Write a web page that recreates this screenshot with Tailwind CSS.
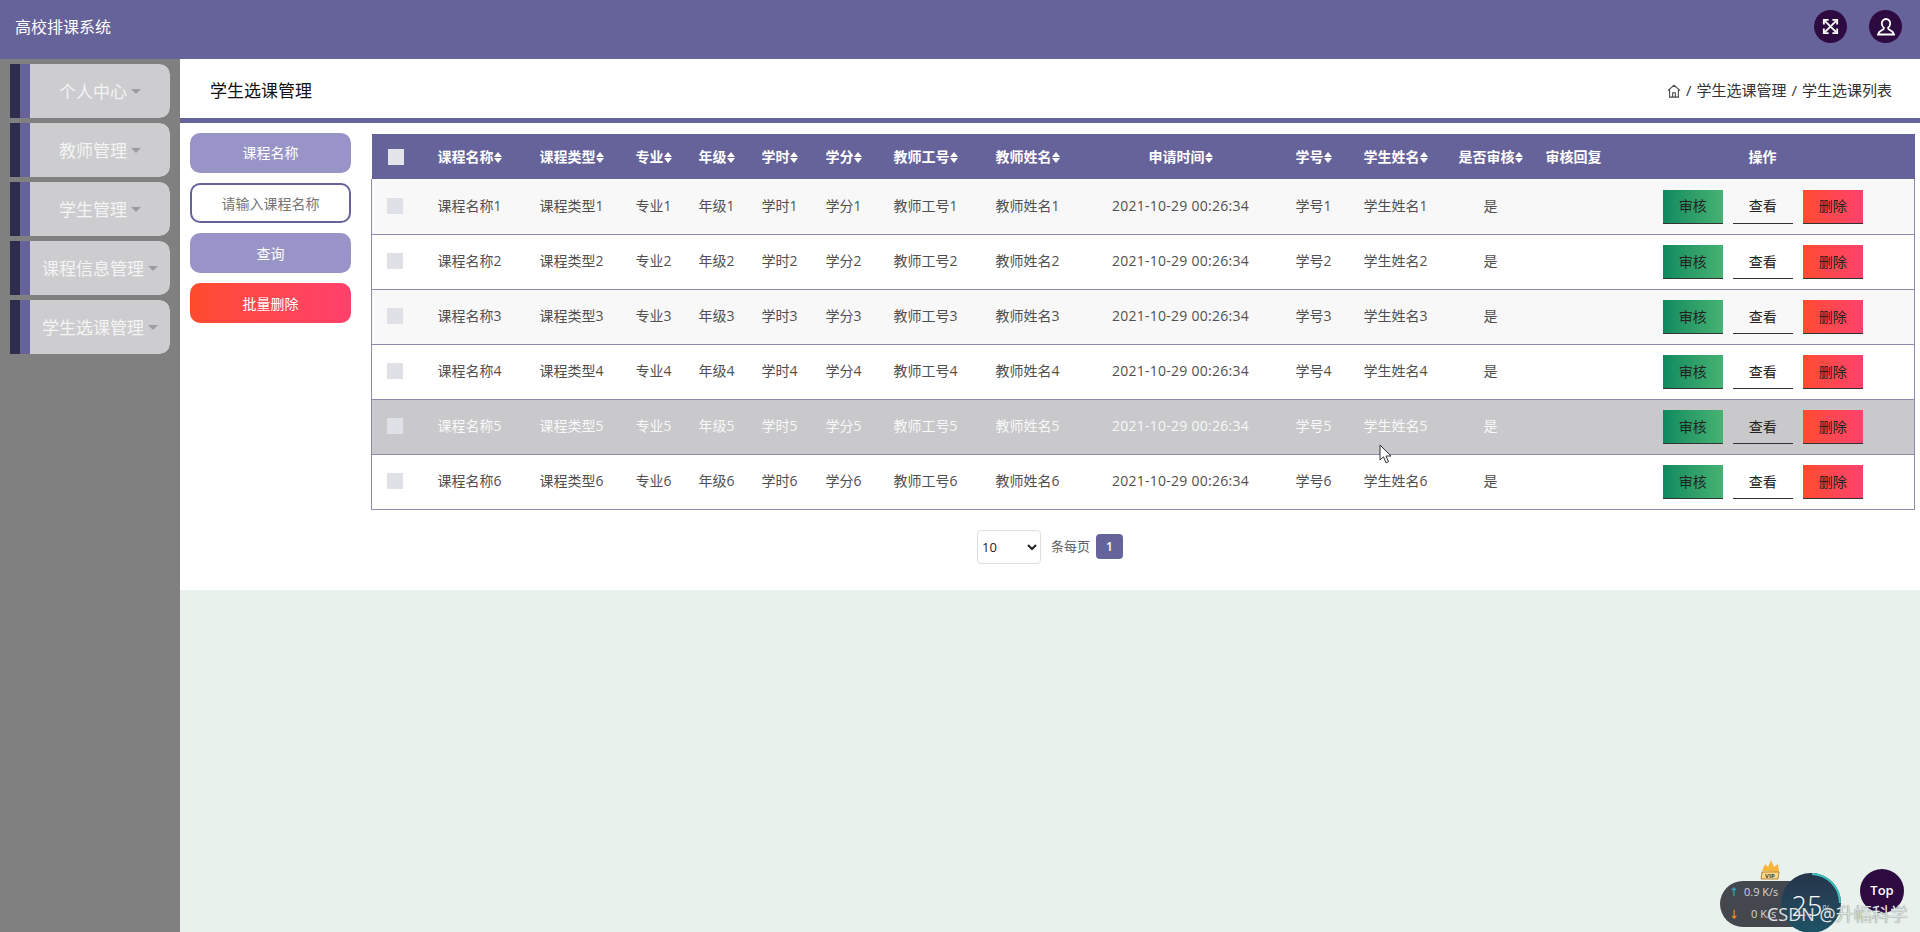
<!DOCTYPE html>
<html lang="zh-CN">
<head>
  <meta charset="UTF-8" />
  <title>高校排课系统</title>
  <script src="https://cdn.jsdelivr.net/npm/@tailwindcss/browser@4"></script>
</head>
<body class="h-[932px] overflow-hidden bg-[#e8f1ec] font-['Open_Sans','Noto_Sans_CJK_SC',sans-serif]">

  <!-- Header -->
  <header class="h-[59px] bg-[#65639a] flex items-start pl-[15px] pr-[18px]">
    <h1 class="text-base text-white flex-1 pt-[15px]">高校排课系统</h1>
    <div class="flex gap-[22px] pt-[10px]">
      <span class="w-[33px] h-[33px] rounded-full bg-[#2d0a3f] flex items-center justify-center">
        <svg class="w-[19px] h-[19px]" viewBox="0 0 20 20" fill="none" stroke="#fff" stroke-width="2"><path d="M4 4l12 12M16 4L4 16"/><path d="M3 8V3h5M12 3h5v5M17 12v5h-5M8 17H3v-5"/></svg>
      </span>
      <span class="w-[33px] h-[33px] rounded-full bg-[#2d0a3f] flex items-center justify-center">
        <svg class="w-[20px] h-[20px]" viewBox="0 0 20 20" fill="none" stroke="#fff" stroke-width="1.8"><path d="M10 2a4.2 4.2 0 0 0-4.2 4.5c0 2 1 3.600 2.200 4.500 0 1.200-1 1.700-2.500 2.300C3.800 14 2.500 15 2 17.500h16c-.5-2.500-1.800-3.500-3.500-4.200-1.500-.6-2.500-1.100-2.500-2.300 1.200-.9 2.200-2.500 2.200-4.500A4.200 4.200 0 0 0 10 2z"/></svg>
      </span>
    </div>
  </header>

  <div class="flex">
    <!-- Sidebar -->
    <aside class="w-[180px] h-[873px] bg-[#808080] pl-[10px] pr-[10px] pt-[5px] flex flex-col gap-[5px] shrink-0" id="sidebar"></aside>

    <!-- Main -->
    <main class="flex-1">
      <section class="bg-white h-[531px]">
        <div class="h-[64px] border-b-[5px] border-[#65639a] flex items-center justify-between pl-[30px] pr-[28px] pt-[4px]">
          <h2 class="text-[17px] text-[#111]">学生选课管理</h2>
          <nav class="flex items-center text-[15px] text-[#333] gap-[5px]">
            <svg class="w-[14px] h-[16px]" viewBox="0 0 16 16" fill="none" stroke="#444" stroke-width="1.200"><path d="M1 7.500 8 1.500l7 6M3 6.500V15h10V6.500M6.500 15V10h3v5"/></svg>
            <span>/</span><span>学生选课管理</span><span>/</span><span>学生选课列表</span>
          </nav>
        </div>

        <div class="flex pl-[10px] pt-[10px] gap-[20px]">
          <!-- Search panel -->
          <div class="w-[161px] flex flex-col gap-[10px] shrink-0">
            <div class="h-[40px] rounded-[10px] bg-[#9894c8] text-white text-sm flex items-center justify-center">课程名称</div>
            <input class="h-[40px] rounded-[10px] border-2 border-[#65639a] bg-white text-sm text-center placeholder:text-[#757575] outline-none" placeholder="请输入课程名称" />
            <button class="h-[40px] rounded-[10px] bg-[#9894c8] text-white text-sm pt-[2px]">查询</button>
            <button class="h-[40px] rounded-[10px] bg-gradient-to-r from-[#ff4b2b] to-[#ff416c] text-white text-sm pt-[2px]">批量删除</button>
          </div>

          <!-- Table -->
          <div class="w-[1543px] mt-[1px]">
            <table class="table-fixed w-[1543px] border-collapse text-sm text-center">
              <colgroup>
                <col class="w-[47px]" /><col class="w-[102px]" /><col class="w-[102px]" /><col class="w-[62px]" /><col class="w-[64px]" /><col class="w-[62px]" /><col class="w-[66px]" /><col class="w-[98px]" /><col class="w-[106px]" /><col class="w-[200px]" /><col class="w-[66px]" /><col class="w-[98px]" /><col class="w-[92px]" /><col class="w-[74px]" /><col class="w-[304px]" />
              </colgroup>
              <thead>
                <tr class="h-[45px] bg-[#65639a] text-white" id="headRow"></tr>
              </thead>
              <tbody id="rows"></tbody>
            </table>

            <!-- Pagination -->
            <div class="flex items-center h-[34px] mt-[20px] pl-[606px] text-[13px] text-[#606266]">
              <select class="w-[64px] h-[34px] border border-[#dcdfe6] rounded-[4px] bg-white text-[#222] text-[13px]">
                <option>10</option>
              </select>
              <span class="ml-[10px]">条每页</span>
              <span class="ml-[6px] w-[27px] h-[25px] rounded-[4px] bg-[#65639a] text-white font-semibold text-xs flex items-center justify-center">1</span>
            </div>
          </div>
        </div>
      </section>
    </main>
  </div>

  <!-- Mouse cursor -->
  <svg class="absolute left-[1379px] top-[444px] w-[14px] h-[20px]" viewBox="0 0 14 20"><path d="M1 1v15l3.500-3.200 2.500 6 2.500-1-2.500-5.800h5z" fill="#fff" stroke="#333" stroke-width="1"/></svg>

  <!-- Top button -->
  <span class="absolute left-[1860px] top-[869px] w-[44px] h-[44px] rounded-full bg-[#2d0a3f] text-white text-[13px] font-semibold flex items-center justify-center">Top</span>

  <!-- Speed widget -->
  <div class="absolute left-[1720px] top-[881px] w-[105px] h-[46px] rounded-[23px] bg-[#45474f] text-[11px] text-[#d5d7da]">
    <div class="flex items-center h-[23px] pl-[9px] gap-[5px]"><span class="text-[#2aa5ee] text-[10px] font-bold">↑</span><span>0.9 K/s</span></div>
    <div class="flex items-center h-[20px] pl-[9px] gap-[12px]"><span class="text-[#f0901e] text-[10px] font-bold">↓</span><span>0 K/s</span></div>
  </div>
  <div class="absolute left-[1781px] top-[873px] w-[60px] h-[60px] rounded-full bg-gradient-to-b from-[#26344a] to-[#1d5366] flex items-center justify-center text-white text-[27px] font-light pt-[6px]">
    <svg class="absolute inset-0 w-[60px] h-[60px]" viewBox="0 0 60 60" fill="none" stroke="#3cc4c0" stroke-width="2"><path d="M31 1a29 29 0 0 1 28 29"/></svg>
    <span>25</span><span class="text-[10px] mt-[6px]">%</span>
  </div>
  <svg class="absolute left-[1759px] top-[859px] w-[24px] h-[24px]" viewBox="0 0 24 24"><path d="M3 12 6 5l3 3 3-7 3 7 4-3 1 8z" fill="#f5b63a"/><path d="M3 13h17l-1 7H2z" fill="#f7d98a" stroke="#b66d1c" stroke-width=".8"/><text x="6" y="19" font-size="6" font-weight="700" fill="#5b3410">VIP</text></svg>

  <!-- Watermark -->
  <span class="absolute left-[1767px] top-[901px] text-[18px] text-[#dfe3e3] [text-shadow:0_0_1px_#555]">CSDN @升幅科学</span>

  <script>
    const sideItems = ['个人中心', '教师管理', '学生管理', '课程信息管理', '学生选课管理'];
    document.getElementById('sidebar').innerHTML = sideItems.map(name => `
      <div class="h-[54px] flex rounded-r-[10px] overflow-hidden shrink-0">
        <span class="w-[10px] bg-[#2f2d4d]"></span>
        <span class="w-[10px] bg-[#65639a]"></span>
        <span class="flex-1 bg-[#cdcdcf] rounded-r-[10px] flex items-center justify-center gap-[4px] pt-[2px] text-[17px] text-[#f4f4f4]">
          ${name}<i class="w-0 h-0 border-x-[5px] border-x-transparent border-t-[5px] border-t-[#9d9d9f] mb-[2px]"></i>
        </span>
      </div>`).join('');

    const sortIcon = `<svg class="inline-block w-[8px] h-[11px] align-[-1px]" viewBox="0 0 8 11" fill="#fff"><path d="M4 0l4 5H0zM4 11l4-5H0z"/></svg>`;
    const heads = ['课程名称', '课程类型', '专业', '年级', '学时', '学分', '教师工号', '教师姓名', '申请时间', '学号', '学生姓名', '是否审核'];
    document.getElementById('headRow').innerHTML =
      `<th><span class="block w-[16px] h-[16px] ml-[16px] bg-[#e3e5ea]"></span></th>` +
      heads.map(h => `<th class="font-semibold whitespace-nowrap">${h}${sortIcon}</th>`).join('') +
      `<th class="font-semibold whitespace-nowrap">审核回复</th><th class="font-semibold">操作</th>`;

    const rows = [1, 2, 3, 4, 5, 6].map(i => {
      const hover = i === 5;
      const rowClass = hover ? 'bg-[#c9c8ca] text-[#f8f8f8]'
        : i % 2 ? 'bg-[#f8f8f9] text-[#505050]' : 'bg-white text-[#505050]';
      const cells = [`课程名称${i}`, `课程类型${i}`, `专业${i}`, `年级${i}`, `学时${i}`, `学分${i}`, `教师工号${i}`, `教师姓名${i}`, '2021-10-29 00:26:34', `学号${i}`, `学生姓名${i}`, '是', ''];
      return `<tr class="h-[55px] border-x border-b border-[#8f8bae] ${rowClass}">
        <td class="pb-[1px]"><span class="block w-[16px] h-[16px] ml-[15px] bg-[#dfe1e6]"></span></td>
        ${cells.map(c => `<td class="whitespace-nowrap pb-[1px] ${c.startsWith('2021') ? 'tracking-[0.27px]' : ''}">${c}</td>`).join('')}
        <td>
          <div class="flex justify-center gap-[10px] pt-[1px] pl-[1px] text-[#222]">
            <span class="w-[60px] h-[34px] flex items-center justify-center bg-gradient-to-r from-[#0b8a5e] to-[#45b373] border-b border-[#333]">审核</span>
            <span class="w-[60px] h-[34px] flex items-center justify-center border-b border-[#333]">查看</span>
            <span class="w-[60px] h-[34px] flex items-center justify-center bg-gradient-to-r from-[#ff4b2b] to-[#ff416c] border-b border-[#333]">删除</span>
          </div>
        </td>
      </tr>`;
    });
    document.getElementById('rows').innerHTML = rows.join('');
  </script>
</body>
</html>
